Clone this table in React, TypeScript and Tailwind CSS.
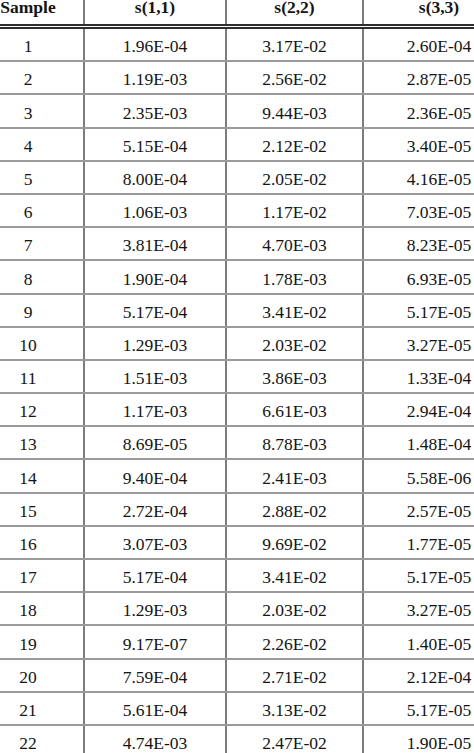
import React from "react";

type Row = [string, string, string, string];

const rows: Row[] = [
  ["1", "1.96E-04", "3.17E-02", "2.60E-04"],
  ["2", "1.19E-03", "2.56E-02", "2.87E-05"],
  ["3", "2.35E-03", "9.44E-03", "2.36E-05"],
  ["4", "5.15E-04", "2.12E-02", "3.40E-05"],
  ["5", "8.00E-04", "2.05E-02", "4.16E-05"],
  ["6", "1.06E-03", "1.17E-02", "7.03E-05"],
  ["7", "3.81E-04", "4.70E-03", "8.23E-05"],
  ["8", "1.90E-04", "1.78E-03", "6.93E-05"],
  ["9", "5.17E-04", "3.41E-02", "5.17E-05"],
  ["10", "1.29E-03", "2.03E-02", "3.27E-05"],
  ["11", "1.51E-03", "3.86E-03", "1.33E-04"],
  ["12", "1.17E-03", "6.61E-03", "2.94E-04"],
  ["13", "8.69E-05", "8.78E-03", "1.48E-04"],
  ["14", "9.40E-04", "2.41E-03", "5.58E-06"],
  ["15", "2.72E-04", "2.88E-02", "2.57E-05"],
  ["16", "3.07E-03", "9.69E-02", "1.77E-05"],
  ["17", "5.17E-04", "3.41E-02", "5.17E-05"],
  ["18", "1.29E-03", "2.03E-02", "3.27E-05"],
  ["19", "9.17E-07", "2.26E-02", "1.40E-05"],
  ["20", "7.59E-04", "2.71E-02", "2.12E-04"],
  ["21", "5.61E-04", "3.13E-02", "5.17E-05"],
  ["22", "4.74E-03", "2.47E-02", "1.90E-05"],
];

const cols = "grid grid-cols-[85px_142px_137px_150px]";

export default function App() {
  return (
    <div
      className="w-[474px] h-[753px] overflow-hidden bg-white text-[#141414] text-[17.5px]"
      style={{ fontFamily: '"Liberation Serif", "Times New Roman", serif' }}
    >
      <div className="w-[514px]">
        <div className={`${cols} h-[29px] border-b-[5px] border-double border-[#2e2e2e] font-bold leading-[14px]`}>
          <div className="border-r-2 border-[#7c7c7c] pr-[27px] text-center">Sample</div>
          <div className="border-r-2 border-[#7c7c7c] text-center">s(1,1)</div>
          <div className="border-r-2 border-[#7c7c7c] text-center">s(2,2)</div>
          <div className="text-center">s(3,3)</div>
        </div>
        {rows.map((r) => (
          <div key={r[0]} className={`${cols} h-[33.2px] border-b-2 border-[#9a9a9a]`}>
            <div className="flex items-center justify-center border-r-2 border-[#7c7c7c] pr-[27px] pt-[3.5px]">
              {r[0]}
            </div>
            <div className="flex items-center justify-center border-r-2 border-[#7c7c7c] pt-[3.5px]">
              {r[1]}
            </div>
            <div className="flex items-center justify-center border-r-2 border-[#7c7c7c] pt-[3.5px]">
              {r[2]}
            </div>
            <div className="flex items-center justify-center pt-[3.5px]">{r[3]}</div>
          </div>
        ))}
      </div>
    </div>
  );
}
